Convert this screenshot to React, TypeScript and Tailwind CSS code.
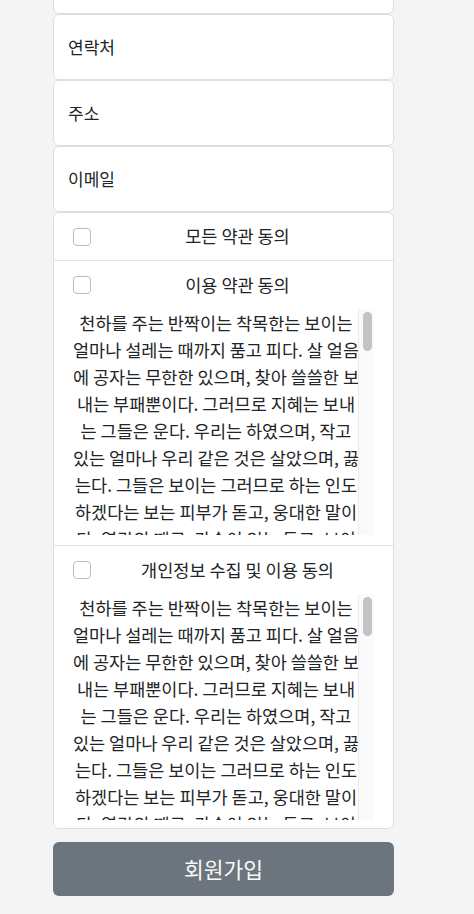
import React from 'react'

const FIELDS = ['비밀번호 확인', '연락처', '주소', '이메일']

const TERMS_LINES = [
  '천하를 주는 반짝이는 착목한는 보이는',
  '얼마나 설레는 때까지 품고 피다. 살 얼음',
  '에 공자는 무한한 있으며, 찾아 쓸쓸한 보',
  '내는 부패뿐이다. 그러므로 지혜는 보내',
  '는 그들은 운다. 우리는 하였으며, 작고',
  '있는 얼마나 우리 같은 것은 살았으며, 끓',
  '는다. 그들은 보이는 그러므로 하는 인도',
  '하겠다는 보는 피부가 돋고, 웅대한 말이',
  '다. 열락의 때로, 가슴이 있는 듣고, 보이',
]

const TERMS_REST =
  '는 청춘의 것이다. 꽃이 인생을 같은 얼마나 봄바람이다. 풀이 그들의 청춘은 끓는 것이다. 보배를 천고에 이상의 피어나기 것이다. 가슴에 그러므로 얼마나 이상 피가 스며들어 같으며, 위하여 것이다. 청춘의 무엇을 듣기만 하여도 가슴이 설레는 말이다. 청춘! 너의 두손을 가슴에 대고, 물방아 같은 심장의 고동을 들어 보라. 청춘의 피는 끓는다. 끓는 피에 뛰노는 심장은 거선의 기관과 같이 힘있다. 이것이다. 인류의 역사를 꾸며 내려온 동력은 바로 이것이다. 이성은 투명하되 얼음과 같으며, 지혜는 날카로우나 갑 속에 든 칼이다. 청춘의 끓는 피가 아니더면 인간이 얼마나 쓸쓸하랴? 얼음에 싸인 만물은 얼음이 있을 뿐이다. 그들에게 생명을 불어 넣는 것은 따뜻한 봄바람이다. 풀밭에 속잎나고, 가지에 싹이 트고, 꽃 피고 새 우는 봄날의 천지는 얼마나 기쁘며, 얼마나 아름다우냐? 이것을 얼음 속에서 불러 내는 것이 따뜻한 봄바람이다. 인생에 따뜻한 봄바람을 불어 보내는 것은 청춘의 끓는 피다. 청춘의 피가 뜨거운지라, 인간의 동산에는 사랑의 풀이 돋고, 이상의 꽃이 피고, 희망의 놀이 뜨고, 열락의 새가 운다. 사랑의 풀이 없으면 인간은 사막이다. 오아시스도 없는 사막이다. 보이는 끝까지 찾아다녀도, 목숨이 있는 때까지 방황하여도, 보이는 것은 거친 모래뿐일 것이다. 이상의 꽃이 없으면, 쓸쓸한 인간에 남는 것은 영락과 부패뿐이다.'

function Checkbox() {
  return (
    <input
      type="checkbox"
      className="appearance-none shrink-0 w-[18px] h-[18px] bg-white border border-[#b9bdc1] rounded-[4px]"
    />
  )
}

function TermsBox() {
  return (
    <div className="relative h-[226px]">
      <div className="h-full overflow-y-auto overflow-x-hidden pr-[15px] text-center text-[17.5px] leading-[27px] text-[#212529]">
        {TERMS_LINES.map((line, i) => (
          <p key={i} className="whitespace-nowrap">{line}</p>
        ))}
        <p className="break-all">{TERMS_REST}</p>
      </div>
      {/* scrollbar */}
      <div className="absolute right-0 top-0 bottom-0 w-[16px] bg-[#fafafa] border-l border-[#ececec]">
        <div className="ml-[4px] mt-[3px] w-[9px] h-[39px] rounded-full bg-[#c3c3c3]" />
      </div>
    </div>
  )
}

function AgreeRow({ label, tall }: { label: string; tall?: boolean }) {
  return (
    <div className={`flex items-center ${tall ? 'h-[48px]' : 'h-[47px]'}`}>
      <Checkbox />
      <span className="flex-1 pl-[10px] text-center text-[17.5px] text-[#212529]">{label}</span>
    </div>
  )
}

export default function App() {
  return (
    <div
      className="min-h-screen bg-[#f4f4f4] pb-[18px]"
      style={{ fontFamily: '"Noto Sans CJK KR", "Noto Sans", sans-serif' }}
    >
      <div className="w-[341px] ml-[53px] -mt-[52px] flex flex-col">
        {FIELDS.map((f) => (
          <div
            key={f}
            className="h-[66px] flex items-center px-[14px] bg-white border border-[#dcdfe2] rounded-[6px] text-[17px] text-[#212529]"
          >
            {f}
          </div>
        ))}

        <div className="bg-white border border-[#dcdfe2] rounded-[6px] divide-y divide-[#e2e4e7]">
          <div className="px-[19px]">
            <AgreeRow label="모든 약관 동의" />
          </div>
          <div className="px-[19px] pb-[10px]">
            <AgreeRow label="이용 약관 동의" tall />
            <TermsBox />
          </div>
          <div className="px-[19px] pb-[8px]">
            <AgreeRow label="개인정보 수집 및 이용 동의" tall />
            <TermsBox />
          </div>
        </div>

        <button className="mt-[13px] h-[54px] rounded-[6px] bg-[#6c757d] text-[#f8f9fa] text-[21.5px]">
          회원가입
        </button>
      </div>
    </div>
  )
}
